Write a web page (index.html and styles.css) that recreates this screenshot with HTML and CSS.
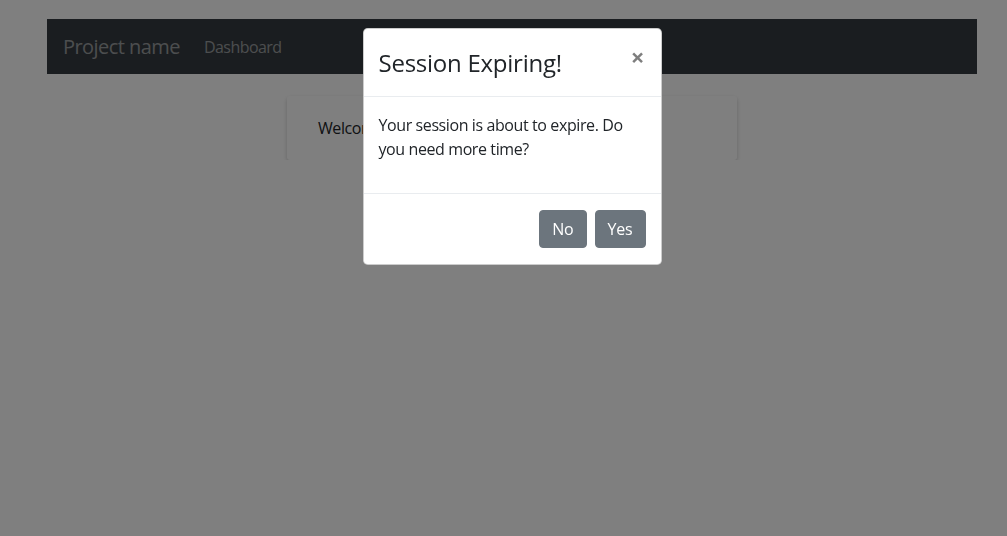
FILE: index.html
```html
<!DOCTYPE html>
<html lang="en">
<head>
    <meta charset="UTF-8">
    <meta name="viewport" content="width=device-width, initial-scale=1.0">
    <title>Dashboard</title>
    <link rel="stylesheet" href="styles.css">
</head>
<body>
    <div class="container">
        <nav class="navbar">
            <a class="brand" href="#">Project name</a>
            <a class="nav-link" href="#">Dashboard</a>
        </nav>
        <div class="card">
            <div class="card-body">Welcome to the dashboard!</div>
        </div>
    </div>

    <div class="backdrop"></div>

    <div class="modal">
        <div class="modal-content">
            <div class="modal-header">
                <h4 class="modal-title">Session Expiring!</h4>
                <button type="button" class="close">&times;</button>
            </div>
            <div class="modal-body">
                <p>Your session is about to expire. Do you need more time?</p>
            </div>
            <div class="modal-footer">
                <button type="button" class="btn">No</button>
                <button type="button" class="btn">Yes</button>
            </div>
        </div>
    </div>
</body>
</html>
```

FILE: styles.css
```css
* {
    box-sizing: border-box;
}
body {
    margin: 0;
    padding: 19px 0 0 17px;
    font-family: "Open Sans", "Noto Sans", sans-serif;
    font-size: 16px;
    line-height: 1.5;
    letter-spacing: -0.4px;
    color: #212529;
    background-color: #fff;
}
a {
    text-decoration: none;
}
.container {
    width: 930px;
    margin: 0 auto;
}
.navbar {
    display: flex;
    align-items: center;
    height: 55px;
    padding: 0 16px;
    background-color: #343a40;
}
.brand {
    font-size: 20px;
    letter-spacing: -0.55px;
    color: rgba(255, 255, 255, 0.5);
    margin-right: 16px;
}
.nav-link {
    padding: 0 8px;
    letter-spacing: -0.55px;
    color: rgba(255, 255, 255, 0.5);
}
.card {
    width: 450px;
    margin: 22px auto 0;
    background: #fff;
    border-radius: 3px;
    box-shadow: 0 2px 4px rgba(0, 0, 0, 0.2);
}
.card-body {
    padding: 20px 31px;
}
.backdrop {
    position: fixed;
    inset: 0;
    background-color: rgba(0, 0, 0, 0.5);
}
.modal {
    position: fixed;
    inset: 0;
    display: flex;
    justify-content: center;
    align-items: flex-start;
    padding: 28px 0 0 17px;
}
.modal-content {
    width: 299px;
    background: #fff;
    border: 1px solid rgba(0, 0, 0, 0.2);
    border-radius: 4.8px;
}
.modal-header {
    display: flex;
    align-items: flex-start;
    padding: 16px 16px 15px 15px;
    border-bottom: 1px solid #e9ecef;
}
.modal-title {
    margin: 0;
    font-size: 24px;
    font-weight: 500;
    line-height: 1.5;
    letter-spacing: -0.25px;
}
.close {
    margin: -16px -16px -16px auto;
    padding: 16px;
    background: none;
    border: 0;
    font-family: inherit;
    font-size: 24px;
    font-weight: 700;
    line-height: 1;
    color: #000;
    opacity: 0.5;
    text-shadow: 0 1px 0 #fff;
    cursor: pointer;
}
.modal-body {
    padding: 16px 15px;
}
.modal-body p {
    margin: 0 0 16px;
}
.modal-footer {
    display: flex;
    justify-content: flex-end;
    gap: 8px;
    padding: 16px 15px;
    border-top: 1px solid #e9ecef;
}
.btn {
    padding: 6px 12px;
    font-family: inherit;
    font-size: 16px;
    line-height: 1.5;
    letter-spacing: -0.2px;
    color: #fff;
    background-color: #6c757d;
    border: 1px solid #6c757d;
    border-radius: 4px;
    cursor: pointer;
}
```
